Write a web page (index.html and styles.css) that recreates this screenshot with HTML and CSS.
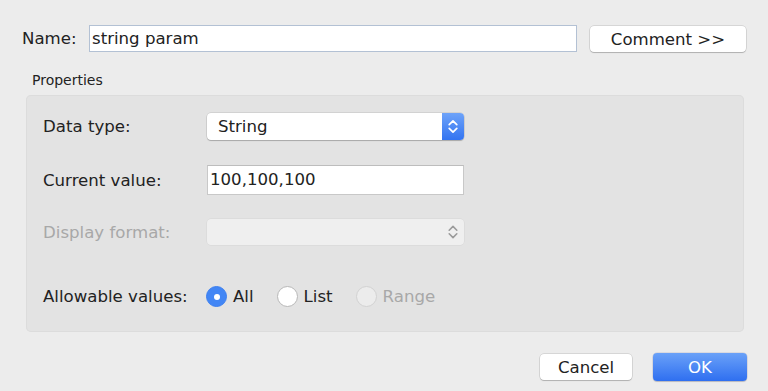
FILE: index.html
```html
<!DOCTYPE html>
<html>
<head>
<meta charset="utf-8">
<link rel="stylesheet" href="styles.css">
</head>
<body>
<div class="dialog">
  <div class="name-row">
    <label class="name-label">Name:</label>
    <div class="name-input">string param</div>
    <button class="btn comment-btn">Comment &gt;&gt;</button>
  </div>
  <div class="section-title">Properties</div>
  <div class="panel">
    <div class="row row-type">
      <div class="label">Data type:</div>
      <div class="select">
        <span class="select-text">String</span>
        <span class="select-arrows">
          <svg width="22" height="27" viewBox="0 0 22 27"><path d="M7.2 11.6 L11 7.8 L14.8 11.6 M7.2 15.4 L11 19.2 L14.8 15.4" fill="none" stroke="#fff" stroke-width="1.7" stroke-linecap="round" stroke-linejoin="round"/></svg>
        </span>
      </div>
    </div>
    <div class="row row-value">
      <div class="label">Current value:</div>
      <div class="text-input">100,100,100</div>
    </div>
    <div class="row row-format">
      <div class="label disabled">Display format:</div>
      <div class="select select-disabled">
        <span class="select-text"></span>
        <span class="select-arrows grey">
          <svg width="22" height="26" viewBox="0 0 22 26"><path d="M7.2 11.2 L11 7.4 L14.8 11.2 M7.2 14.8 L11 18.6 L14.8 14.8" fill="none" stroke="#9b9b9b" stroke-width="1.6" stroke-linecap="round" stroke-linejoin="round"/></svg>
        </span>
      </div>
    </div>
    <div class="row row-allow">
      <div class="label">Allowable values:</div>
      <div class="radios">
        <span class="radio-item"><span class="radio checked"></span><span>All</span></span>
        <span class="radio-item"><span class="radio"></span><span>List</span></span>
        <span class="radio-item disabled"><span class="radio off"></span><span>Range</span></span>
      </div>
    </div>
  </div>
  <div class="footer">
    <button class="btn cancel-btn">Cancel</button>
    <button class="btn ok-btn">OK</button>
  </div>
</div>
</body>
</html>
```
FILE: styles.css
```css
html, body {
  margin: 0;
  padding: 0;
  background: #ececec;
}
body {
  font-family: "DejaVu Sans", "Lucida Grande", sans-serif;
  font-size: 16.6px;
  color: #222;
  width: 768px;
  height: 391px;
  overflow: hidden;
}
.dialog {
  padding: 25px 22px 0 22px;
}
.name-row {
  display: flex;
  align-items: center;
  height: 27px;
}
.name-label {
  width: 67px;
  line-height: 27px;
}
.name-input {
  box-sizing: border-box;
  width: 488px;
  height: 27px;
  background: #fff;
  border: 1px solid #b3c1d4;
  padding: 0 2px;
  line-height: 25px;
}
.btn {
  font-family: inherit;
  font-size: 16.6px;
  color: #222;
  background: #fff;
  border: none;
  border-radius: 4px;
  box-shadow: 0 0 0 0.5px rgba(0,0,0,0.18), 0 1px 1px rgba(0,0,0,0.18);
  padding: 0;
  margin: 0;
}
.comment-btn {
  margin-left: 13px;
  width: 156px;
  height: 26px;
  margin-top: 1px;
}
.section-title {
  margin-top: 19px;
  padding-left: 10px;
  font-size: 14px;
  line-height: 18px;
  color: #222;
}
.panel {
  margin: 6px 2px 0 4px;
  box-sizing: border-box;
  height: 237px;
  background: #e3e3e3;
  border-radius: 5px;
  box-shadow: inset 0 0 0 1px #dcdcdc;
  padding: 18px 0 0 17px;
  display: flex;
  flex-direction: column;
}
.row {
  display: flex;
  align-items: center;
}
.row .label {
  width: 164px;
}
.label.disabled {
  color: #a8a8a8;
}
.row-type { height: 27px; }
.row-value { height: 30px; margin-top: 25px; }
.row-format { height: 26px; margin-top: 24px; }
.row-allow { height: 21px; margin-top: 41px; }

.select {
  box-sizing: border-box;
  width: 257px;
  height: 100%;
  display: flex;
  background: #fff;
  border-radius: 4px;
  box-shadow: 0 0 0 0.5px rgba(0,0,0,0.15), 0 1px 1px rgba(0,0,0,0.2);
  overflow: hidden;
}
.select-text {
  flex: 1;
  padding-left: 11px;
  line-height: 27px;
}
.select-arrows {
  width: 22px;
  height: 100%;
  background: linear-gradient(#6ea3f9, #3374f1);
  display: flex;
  align-items: center;
  justify-content: center;
}
.select-arrows svg { display: block; }
.select-disabled {
  background: #efefef;
  box-shadow: 0 0 0 0.5px rgba(0,0,0,0.06);
}
.select-arrows.grey {
  background: transparent;
}
.text-input {
  box-sizing: border-box;
  width: 257px;
  height: 30px;
  background: #fff;
  border: 1px solid #c8c8c8;
  border-top-color: #bdbdbd;
  padding-left: 2px;
  line-height: 28px;
}
.radios {
  display: flex;
  align-items: center;
}
.radio-item {
  display: flex;
  align-items: center;
  margin-right: 23px;
}
.radio-item:first-child {
  margin-left: -1px;
}
.radio-item.disabled {
  color: #a8a8a8;
}
.radio {
  box-sizing: border-box;
  width: 21px;
  height: 21px;
  border-radius: 50%;
  background: #fff;
  border: 1px solid #b8b8b8;
  margin-right: 6px;
  position: relative;
}
.radio.checked {
  background: #4286f5;
  border-color: #3c7ff0;
}
.radio.checked::after {
  content: "";
  position: absolute;
  left: 6.5px;
  top: 6.5px;
  width: 6px;
  height: 6px;
  border-radius: 50%;
  background: #fff;
}
.radio.off {
  background: #ececec;
  border-color: #d2d2d2;
}
.footer {
  display: flex;
  justify-content: flex-end;
  align-items: center;
  margin-top: 21px;
  margin-right: -1px;
}
.cancel-btn {
  width: 92px;
  height: 26px;
}
.ok-btn {
  margin-left: 21px;
  width: 94px;
  height: 28px;
  color: #fff;
  background: linear-gradient(#6aa1f8, #2f6ff0);
  box-shadow: 0 0 0 0.5px rgba(0,0,80,0.15), 0 1px 1px rgba(0,0,0,0.15);
}
```
